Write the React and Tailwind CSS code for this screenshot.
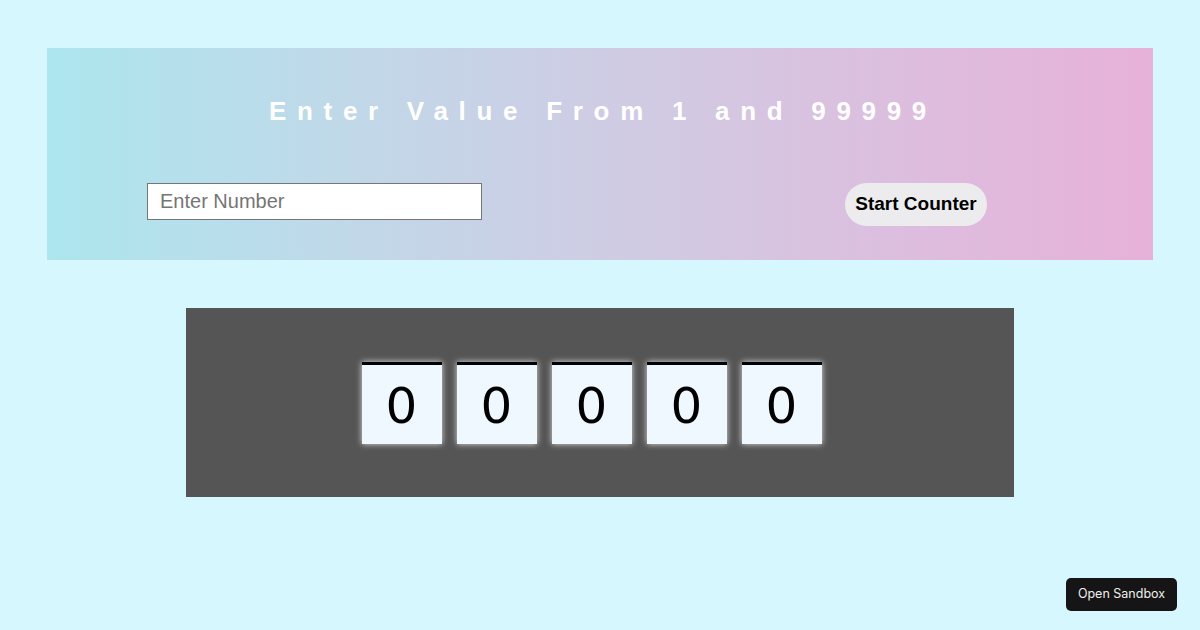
import React from "react";

export default function App() {
  const digits = ["0", "0", "0", "0", "0"];
  return (
    <div className="relative w-[1200px] h-[630px] bg-[#d6f7fe] pt-[48px] overflow-hidden">
      <div className="ml-[47px] w-[1106px] h-[212px] bg-gradient-to-r from-[#ace6ee] to-[#e7b1da] pt-[48px] flex flex-col">
        <h1
          className="text-center text-white font-bold text-[26px] leading-[30px] tracking-[10.7px] pl-[6px]"
          style={{ fontFamily: '"Liberation Sans", Arial, sans-serif' }}
        >
          Enter Value From 1 and 99999
        </h1>
        <div className="flex items-start justify-between pl-[100px] pr-[166px] mt-[57px]">
          <input
            type="text"
            placeholder="Enter Number"
            className="w-[335px] h-[37px] bg-white border border-[#767676] px-[12px] text-[20px] text-black placeholder:text-[#757575] outline-none"
            style={{ fontFamily: '"Liberation Sans", Arial, sans-serif' }}
          />
          <button
            className="w-[142px] h-[43px] rounded-[22px] bg-[#ececef] text-black font-bold text-[19px]"
            style={{ fontFamily: '"Liberation Sans", Arial, sans-serif' }}
          >
            Start Counter
          </button>
        </div>
      </div>

      <div className="mx-auto mt-[48px] w-[828px] h-[189px] bg-[#555555] flex items-center justify-center">
        <div className="flex pr-[2px]">
          {digits.map((d, i) => (
            <div
              key={i}
              className="mr-[15px] w-[80px] h-[82px] bg-[#f0f8ff] border-t-[3px] border-black shadow-[0_0_6px_#e0e0e0] flex items-center justify-center pt-[3px] text-[50px] text-black leading-none"
              style={{ fontFamily: '"DejaVu Sans", sans-serif' }}
            >
              {d}
            </div>
          ))}
        </div>
      </div>

      <div
        className="fixed right-[23px] bottom-[19px] w-[111px] h-[33px] rounded-[5px] bg-[#151515] text-[#f0f0f0] text-[12.5px] flex items-center justify-center"
        style={{ fontFamily: 'Inter, "Liberation Sans", sans-serif' }}
      >
        Open Sandbox
      </div>
    </div>
  );
}
